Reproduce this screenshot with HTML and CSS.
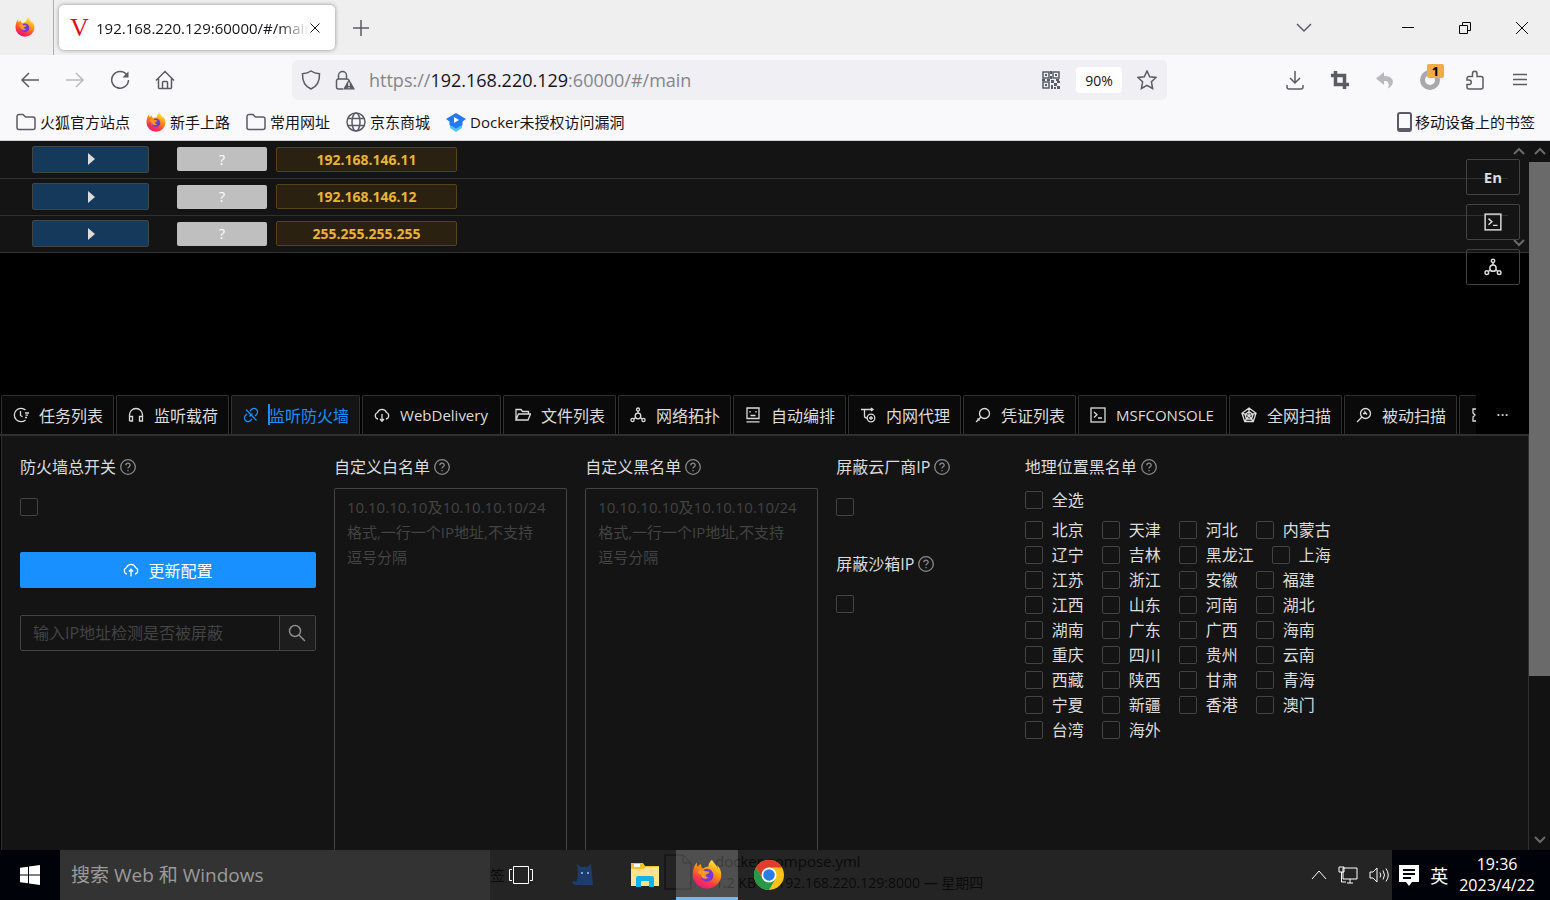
FILE: index.html
```html
<!DOCTYPE html>
<html lang="zh-CN">
<head>
    <meta charset="UTF-8">
    <meta name="viewport" content="width=device-width, initial-scale=1.0">
    <title>192.168.220.129:60000/#/main</title>
    <link rel="stylesheet" href="styles.css">
</head>
<body>
    <!-- shared icons -->
    <svg class="sprite" width="0" height="0" aria-hidden="true">
        <defs>
            <linearGradient id="fire" x1="0.8" y1="0" x2="0.3" y2="1">
                <stop offset="0" stop-color="#fff44f"/>
                <stop offset="0.4" stop-color="#ff980e"/>
                <stop offset="0.75" stop-color="#ff3647"/>
                <stop offset="1" stop-color="#e31587"/>
            </linearGradient>
            <symbol id="firefox" viewBox="0 0 20 20">
                <path fill="url(#fire)" d="M18.6 6.6c-.4-1-1.300-2-2-2.400.5 1 .8 1.900.9 2.600-1-2.700-3-3.800-4.200-6.300C11.500 2 10.900 3.500 11 5c-1.500.1-2.600.6-3.500 1.300C6 5.800 5.900 4.200 6 3.300 5 3.800 4.300 4.500 3.800 5.200 3.200 4.400 3.200 3.200 3.300 2.300 1.500 4 .5 7 .5 10.500a9.500 9.300 0 0 0 19 0c0-1.400-.4-2.900-.9-3.900z"/>
                <circle cx="10" cy="10.800" r="4.300" fill="#7139d6"/>
                <path fill="#ff9a1f" d="M3.500 8.500c1.500-1.600 4-1.500 5.500-.3 1 .1 2 .1 2.500.4-.2 1-1.600 1.400-2.300 1.900-.4 1 .6 2 2.100 1.700-1.500 1.700-5.200 1.100-5.600-1.700z"/>
            </symbol>
            <symbol id="folder" viewBox="0 0 20 20">
                <path d="M1 4.500a2 2 0 0 1 2-2h4l2.500 2.500H17a2 2 0 0 1 2 2v8.500a2 2 0 0 1-2 2H3a2 2 0 0 1-2-2z"/>
            </symbol>
            <symbol id="console" viewBox="0 0 16 16">
                <rect x="1" y="1" width="14" height="14"/>
                <path d="M4 5l3 2.800L4 10.500M8 11h4"/>
            </symbol>
            <symbol id="topology" viewBox="0 0 16 16">
                <circle cx="8" cy="2.500" r="1.500"/><circle cx="8" cy="9" r="2.800"/>
                <circle cx="2.500" cy="13" r="1.600"/><circle cx="13.500" cy="13" r="1.600"/>
                <path d="M8 4v2.200M5.600 10.500L3.800 12M10.400 10.500l1.800 1.500"/>
            </symbol>
            <symbol id="help" viewBox="0 0 16 16">
                <circle cx="8" cy="8" r="7.300"/>
                <path d="M5.800 6.300c.1-3 4.500-2.700 4.400-.1 0 1.500-2.200 1.500-2.200 3.200M8 11v1.200"/>
            </symbol>
            <symbol id="up" viewBox="0 0 12 8"><path d="M1 7l5-5 5 5"/></symbol>
            <symbol id="down" viewBox="0 0 12 8"><path d="M1 1l5 5 5-5"/></symbol>
        </defs>
    </svg>

    <header class="browser">
        <div class="tabstrip">
            <div class="pinned"><svg class="i20 plain"><use href="#firefox"/></svg></div>
            <div class="browser-tab">
                <span class="favicon">V</span>
                <span class="tab-title">192.168.220.129:60000/#/main</span>
                <button class="tab-close" aria-label="关闭标签页"><svg width="12" height="12" viewBox="0 0 12 12"><path d="M1.500 1.500l9 9M10.500 1.500l-9 9"/></svg></button>
            </div>
            <button class="new-tab" aria-label="新标签页"><svg width="16" height="16" viewBox="0 0 16 16"><path d="M8 0v16M0 8h16"/></svg></button>
            <div class="window-controls">
                <button class="list-tabs" aria-label="列出标签页"><svg width="18" height="12" viewBox="0 0 18 12"><path d="M2 2l7 7 7-7"/></svg></button>
                <button aria-label="最小化"><svg width="14" height="14" viewBox="0 0 14 14"><path d="M1 6.500h12"/></svg></button>
                <button aria-label="还原"><svg width="14" height="14" viewBox="0 0 14 14"><path d="M1.500 4.500h8v8h-8zM4.500 4V1.500h8v8H10"/></svg></button>
                <button aria-label="关闭"><svg width="14" height="14" viewBox="0 0 14 14"><path d="M1 1l12 12M13 1L1 13"/></svg></button>
            </div>
        </div>

        <div class="toolbar">
            <div class="tool-group">
                <button aria-label="后退"><svg class="i20" viewBox="0 0 20 20"><path d="M19 10H2M9 3l-7 7 7 7"/></svg></button>
                <button class="faded" aria-label="前进"><svg class="i20" viewBox="0 0 20 20"><path d="M1 10h17M11 3l7 7-7 7"/></svg></button>
                <button aria-label="刷新"><svg class="i20" viewBox="0 0 20 20"><path d="M17 5a8.400 8.400 0 1 0 1.500 5"/><path class="solid" d="M12.500 7.500h6v-6z"/></svg></button>
                <button aria-label="主页"><svg class="i20" viewBox="0 0 20 20"><path d="M1 10.500l9-9 9 9M3.500 8v9.500a1 1 0 0 0 1 1h11a1 1 0 0 0 1-1V8M7.500 18v-5.500a1 1 0 0 1 1-1h3a1 1 0 0 1 1 1V18"/></svg></button>
            </div>
            <div class="spacer"></div>
            <div class="urlbar">
                <svg class="i20" viewBox="0 0 20 20"><path d="M10 1c2.500 1.800 5 2.500 8.500 2.700.3 6.800-2 12.300-8.500 15.300C3.500 16 1.200 10.500 1.500 3.700 5 3.500 7.500 2.800 10 1z"/></svg>
                <svg class="i20 lock" viewBox="0 0 20 20"><path d="M8 19H3.500a2 2 0 0 1-2-2v-6a2 2 0 0 1 2-2h8a2 2 0 0 1 2 1M3.500 9V5.500a4 4 0 0 1 8 0V9"/><path class="solid" d="M14 9l6 10.500H8z"/><path class="mark" d="M14 12.500v3.500M14 17.300v1"/></svg>
                <div class="url">https://<b>192.168.220.129</b>:60000/#/main</div>
                <svg class="i20 qr" viewBox="0 0 20 20"><path d="M2 2h6v6H2zM12 2h6v6h-6zM2 12h6v6H2z"/><path class="solid" d="M4 4h2v2H4zM14 4h2v2h-2zM4 14h2v2H4zM9 1h2v3H9zM9 6h2v3H9zM1 9h3v2H1zM6 9h3v2H6zM10 10h3v3h-3zM15 9h3v2h-3zM13 13h3v3h-3zM16 11h3v2h-3zM10 15h2v4h-2zM16 16h3v3h-3zM13 17h2v2h-2z"/></svg>
                <button class="zoom-level">90%</button>
                <svg class="i20" viewBox="0 0 20 20"><path d="M10 1l2.700 5.700 6.300.8-4.600 4.300 1.200 6.700L10 15.300l-5.600 3.200 1.200-6.700L1 7.500l6.300-.8z"/></svg>
            </div>
            <div class="spacer"></div>
            <div class="tool-group">
                <button aria-label="下载"><svg class="i20" viewBox="0 0 20 20"><path d="M10 1v12M5 8l5 5 5-5M2 15v2a2 2 0 0 0 2 2h12a2 2 0 0 0 2-2v-2"/></svg></button>
                <button aria-label="截图"><svg class="i20 thick" viewBox="0 0 20 20"><path d="M5.500 1v13.500H19M1 5.500h13.500V19"/></svg></button>
                <button class="faded" aria-label="撤销"><svg class="i20" viewBox="0 0 20 20"><path class="solid" d="M9 2L1 8.500 9 15v-4c4-.3 6 1.500 4 7.500 8-5 6-12.500-4-12.500z"/></svg></button>
                <button class="ring" aria-label="代理"><svg class="i20" viewBox="0 0 20 20"><circle cx="10" cy="10" r="7.500"/></svg><span class="count">1</span></button>
                <button aria-label="扩展"><svg class="i20" viewBox="0 0 20 20"><path d="M7.500 6.500V3.500a2 2 0 0 1 4.500 0v3h4a2 2 0 0 1 2 2V17a2 2 0 0 1-2 2H4a2 2 0 0 1-2-2v-2.500h2a2 2 0 0 0 0-4.500H2V8.500a2 2 0 0 1 2-2z"/></svg></button>
                <button aria-label="菜单"><svg class="i20" viewBox="0 0 20 20"><path d="M3 4.500h14M3 9.500h14M3 14.500h14"/></svg></button>
            </div>
        </div>

        <nav class="bookmarks">
            <a href="#"><svg class="i20"><use href="#folder"/></svg>火狐官方站点</a>
            <a href="#"><svg class="i20 plain"><use href="#firefox"/></svg>新手上路</a>
            <a href="#"><svg class="i20"><use href="#folder"/></svg>常用网址</a>
            <a href="#"><svg class="i20" viewBox="0 0 20 20"><circle cx="10" cy="10" r="9"/><ellipse cx="10" cy="10" rx="4" ry="9"/><path d="M2 6.500h16M2 13.500h16"/></svg>京东商城</a>
            <a href="#"><svg class="i20 plain" viewBox="0 0 20 20"><path fill="#52c4f5" d="M4 13l6 3 6-3v3l-6 4-6-4z"/><path fill="#2378f5" d="M10 1l10 6-3.500 2.500V13L10 16.500 3.500 13V9.500L0 7z"/><path fill="#fff" d="M8 5l5 3-5 3z"/></svg>Docker未授权访问漏洞</a>
            <a class="mobile" href="#"><svg width="17" height="20" viewBox="0 0 17 20"><rect x="2" y="1" width="13" height="18" rx="2"/><path d="M2 17h13"/></svg>移动设备上的书签</a>
        </nav>
    </header>

    <main class="page">
        <div class="app">
            <section class="hosts">
                <table class="host-table">
                    <tbody>
                        <tr>
                            <td><button class="expand" aria-label="展开"><svg width="8" height="12" viewBox="0 0 8 12"><path d="M1 0l7 6-7 6z"/></svg></button></td>
                            <td><span class="tag unknown">?</span></td>
                            <td><span class="tag ip">192.168.146.11</span></td>
                        </tr>
                        <tr>
                            <td><button class="expand" aria-label="展开"><svg width="8" height="12" viewBox="0 0 8 12"><path d="M1 0l7 6-7 6z"/></svg></button></td>
                            <td><span class="tag unknown">?</span></td>
                            <td><span class="tag ip">192.168.146.12</span></td>
                        </tr>
                        <tr>
                            <td><button class="expand" aria-label="展开"><svg width="8" height="12" viewBox="0 0 8 12"><path d="M1 0l7 6-7 6z"/></svg></button></td>
                            <td><span class="tag unknown">?</span></td>
                            <td><span class="tag ip">255.255.255.255</span></td>
                        </tr>
                    </tbody>
                </table>
                <div class="host-scroll">
                    <svg width="12" height="8"><use href="#up"/></svg>
                    <svg width="12" height="8"><use href="#down"/></svg>
                </div>
                <div class="float-buttons">
                    <button>En</button>
                    <button aria-label="控制台"><svg width="18" height="18"><use href="#console"/></svg></button>
                    <button aria-label="网络拓扑"><svg width="18" height="18"><use href="#topology"/></svg></button>
                </div>
            </section>

            <nav class="tabs">
                <div class="tab-list">
                    <button class="tab"><svg viewBox="0 0 16 16"><path d="M12.500 3A6.700 6.700 0 1 0 12.500 13M7.500 4v4.500l2 1.200M12 6h4M12.500 8.200H15M12 10.500h2"/></svg>任务列表</button>
                    <button class="tab"><svg viewBox="0 0 16 16"><path d="M1.500 14V8a6.500 6.500 0 0 1 13 0v6h-3V9.500h3M1.500 9.500h3V14h-3"/></svg>监听载荷</button>
                    <button class="tab active"><svg viewBox="0 0 16 16"><path d="M7 4l1.500-1.500a3.200 3.200 0 0 1 5 5L12 9M9 12l-1.500 1.500a3.200 3.200 0 0 1-5-5L4 7M6.500 9.500l3-3M3 2.500l10.500 11"/></svg><span class="caret">监听防火墙</span></button>
                    <button class="tab latin"><svg viewBox="0 0 16 16"><path d="M4 12a3.400 3.400 0 0 1-.5-6.500 4.800 4.800 0 0 1 9 0A3.400 3.400 0 0 1 12 12M8 7v7M6 12l2 2.200 2-2.200"/></svg>WebDelivery</button>
                    <button class="tab"><svg viewBox="0 0 16 16"><path d="M1 13V2.500h5l1.500 2h6V7M1 13L3.500 7h12L13 13z"/></svg>文件列表</button>
                    <button class="tab"><svg><use href="#topology"/></svg>网络拓扑</button>
                    <button class="tab"><svg viewBox="0 0 16 16"><path d="M2 1h12v10.500H2zM1.500 14.800h13M5 4v1.500M11 4v1.500M5.500 8.500h5"/></svg>自动编排</button>
                    <button class="tab"><svg viewBox="0 0 16 16"><path d="M1 2.500h11M4.500 2.500V9q0 2 2.500 2M11 1l2 1.500L11 4"/><circle cx="11" cy="11" r="3.800"/><path d="M9 11h4M11 9v4"/></svg>内网代理</button>
                    <button class="tab"><svg viewBox="0 0 16 16"><circle cx="9.500" cy="6.500" r="5"/><path d="M6 10l-5 5M2.500 11.500l2 2"/></svg>凭证列表</button>
                    <button class="tab latin"><svg><use href="#console"/></svg>MSFCONSOLE</button>
                    <button class="tab"><svg viewBox="0 0 16 16"><path d="M8 1l7 5.200-2.700 8.300H3.700L1 6.200zM8 4.500l4 3-1.500 4.500h-5L4 7.500zM8 1v7M15 6.200L8 8.500 1 6.200M3.700 14.500L8 8.500l4.300 6"/></svg>全网扫描</button>
                    <button class="tab"><svg viewBox="0 0 16 16"><circle cx="9.500" cy="6.500" r="5"/><path d="M6 10l-5 5M7 6.500h2V5l2 2.500"/></svg>被动扫描</button>
                    <button class="tab" aria-label="设置"><svg viewBox="0 0 16 16"><path d="M6 2H2v4l2 2-2 2v4h4l2-1 2 1h4v-4l-2-2 2-2V2h-4L8 3z"/></svg></button>
                </div>
                <button class="more" aria-label="更多">···</button>
            </nav>

            <section class="panel">
                <div class="col">
                    <h2>防火墙总开关 <svg><use href="#help"/></svg></h2>
                    <input type="checkbox" class="switch" aria-label="防火墙总开关">
                    <button class="update"><svg width="16" height="16" viewBox="0 0 16 16"><path d="M4 12a3.400 3.400 0 0 1-.5-6.500 4.800 4.800 0 0 1 9 0A3.400 3.400 0 0 1 12 12M8 14.500V7.500M6 9.500l2-2.200 2 2.200"/></svg>更新配置</button>
                    <form class="check-ip">
                        <input type="text" placeholder="输入IP地址检测是否被屏蔽" aria-label="IP地址">
                        <button type="button" aria-label="搜索"><svg width="18" height="18" viewBox="0 0 18 18"><circle cx="7" cy="7" r="5.500"/><path d="M11 11l6 6"/></svg></button>
                    </form>
                </div>
                <div class="col">
                    <h2><label for="white">自定义白名单</label> <svg><use href="#help"/></svg></h2>
                    <textarea id="white" placeholder="10.10.10.10及10.10.10.10/24格式,一行一个IP地址,不支持逗号分隔"></textarea>
                </div>
                <div class="col">
                    <h2><label for="black">自定义黑名单</label> <svg><use href="#help"/></svg></h2>
                    <textarea id="black" placeholder="10.10.10.10及10.10.10.10/24格式,一行一个IP地址,不支持逗号分隔"></textarea>
                </div>
                <div class="col">
                    <h2><label for="cloud">屏蔽云厂商IP</label> <svg><use href="#help"/></svg></h2>
                    <input type="checkbox" class="switch" id="cloud">
                    <h2><label for="sandbox">屏蔽沙箱IP</label> <svg><use href="#help"/></svg></h2>
                    <input type="checkbox" class="switch" id="sandbox">
                </div>
                <div class="col">
                    <h2>地理位置黑名单 <svg><use href="#help"/></svg></h2>
                    <div class="regions all"><label><input type="checkbox">全选</label></div>
                    <div class="regions">
                        <label><input type="checkbox">北京</label>
                        <label><input type="checkbox">天津</label>
                        <label><input type="checkbox">河北</label>
                        <label><input type="checkbox">内蒙古</label>
                        <label><input type="checkbox">辽宁</label>
                        <label><input type="checkbox">吉林</label>
                        <label><input type="checkbox">黑龙江</label>
                        <label><input type="checkbox">上海</label>
                        <label><input type="checkbox">江苏</label>
                        <label><input type="checkbox">浙江</label>
                        <label><input type="checkbox">安徽</label>
                        <label><input type="checkbox">福建</label>
                        <label><input type="checkbox">江西</label>
                        <label><input type="checkbox">山东</label>
                        <label><input type="checkbox">河南</label>
                        <label><input type="checkbox">湖北</label>
                        <label><input type="checkbox">湖南</label>
                        <label><input type="checkbox">广东</label>
                        <label><input type="checkbox">广西</label>
                        <label><input type="checkbox">海南</label>
                        <label><input type="checkbox">重庆</label>
                        <label><input type="checkbox">四川</label>
                        <label><input type="checkbox">贵州</label>
                        <label><input type="checkbox">云南</label>
                        <label><input type="checkbox">西藏</label>
                        <label><input type="checkbox">陕西</label>
                        <label><input type="checkbox">甘肃</label>
                        <label><input type="checkbox">青海</label>
                        <label><input type="checkbox">宁夏</label>
                        <label><input type="checkbox">新疆</label>
                        <label><input type="checkbox">香港</label>
                        <label><input type="checkbox">澳门</label>
                        <label><input type="checkbox">台湾</label>
                        <label><input type="checkbox">海外</label>
                    </div>
                </div>
            </section>
        </div>

        <div class="scrollbar">
            <svg width="12" height="8"><use href="#up"/></svg>
            <div class="track"><div class="thumb"></div></div>
            <svg width="12" height="8"><use href="#down"/></svg>
        </div>
    </main>

    <footer class="taskbar">
        <!-- window showing through the translucent bar -->
        <div class="ghost ghost-label">签</div>
        <div class="ghost ghost-file">
            <svg width="28" height="36" viewBox="0 0 28 36"><path d="M1 1h18l8 8v26H1zM19 1v8h8"/></svg>
            <div>
                <div>docker-compose.yml</div>
                <div class="small">1.2 KB — 192.168.220.129:8000 — 星期四</div>
            </div>
        </div>
        <button class="start" aria-label="开始"><svg width="20" height="20" viewBox="0 0 20 20"><path fill="#fff" d="M0 2.800L8 1.700v7.800H0zM9 1.500L20 0v9.500H9zM0 10.500h8v7.800l-8-1.100zM9 10.500h11V20L9 18.500z"/></svg></button>
        <input class="search" type="text" placeholder="搜索 Web 和 Windows" aria-label="搜索">
        <button class="app-icon" aria-label="任务视图"><svg width="24" height="20" viewBox="0 0 24 20"><path fill="none" stroke="#fff" d="M4.500 1.500h15v17h-15zM3 4.500H.5v11H3M21 4.500h2.500v11H21"/></svg></button>
        <button class="app-icon" aria-label="Clash"><svg width="22" height="22" viewBox="0 0 22 22"><path fill="#1c3c6b" d="M5 0l4 3h6l4-3 1 9 1 12H5c-5 0-6-4-3-4l2 1 1-2 1-7z"/><circle cx="10" cy="9" r="1" fill="#a8c3e8"/><circle cx="16" cy="9" r="1" fill="#a8c3e8"/></svg></button>
        <button class="app-icon" aria-label="文件资源管理器"><svg width="28" height="24" viewBox="0 0 28 24"><path fill="#f6c12c" d="M0 0h12l2 3h14v20H0z"/><path fill="#ffe391" d="M0 6h12l3-2h13v19H0z"/><path fill="#fff" d="M3 1h6v3H3z"/><path fill="#12b3ea" d="M5 24V15q0-2 2-2h14q2 0 2 2v9h-5v-6h-8v6z"/></svg></button>
        <button class="app-icon running" aria-label="Firefox"><svg width="30" height="30"><use href="#firefox"/></svg></button>
        <button class="app-icon" aria-label="Chrome"><svg width="30" height="30" viewBox="0 0 30 30"><circle cx="15" cy="15" r="15" fill="#fbc116"/><path fill="#e33b2e" d="M2 7.500a15 15 0 0 1 26 0H15L8.500 18.800z"/><path fill="#279847" d="M2 7.500A15 15 0 0 0 15 30l6.500-11.300-13 0z"/><circle cx="15" cy="15" r="7.500" fill="#fff"/><circle cx="15" cy="15" r="5.800" fill="#2a7de9"/></svg></button>
        <div class="tray">
            <svg width="16" height="20" viewBox="0 0 16 20"><path d="M1 14l7-8 7 8"/></svg>
            <svg width="20" height="20" viewBox="0 0 20 20"><path d="M5 3h14v11H5zM9 18h6M12 14v4M1 2h5v5H1zM3.500 7v10H8"/></svg>
            <svg width="20" height="20" viewBox="0 0 20 20"><path d="M1 7h3l4-4v14l-4-4H1zM11 7.500q1.500 2.500 0 5M14 5.500q3 4.500 0 9M17 3.500q4.500 6.500 0 13"/></svg>
        </div>
        <div class="clock-area">
            <svg width="20" height="22" viewBox="0 0 20 22"><path fill="#fff" d="M0 1h20v17h-7l-3 4-3-4H0z"/><path stroke="#00020a" stroke-width="2" d="M4 6h12M4 10h12M4 14h8"/></svg>
            <span class="ime">英</span>
            <time>19:36<br>2023/4/22</time>
        </div>
    </footer>
</body>
</html>
```
FILE: styles.css
```css
* {
    box-sizing: border-box;
}
body {
    margin: 0;
    height: 100vh;
    display: flex;
    flex-direction: column;
    overflow: hidden;
    background-color: #000;
    font-family: "Open Sans", "Noto Sans CJK SC", sans-serif;
    font-size: 15px;
}
button, input, textarea {
    font: inherit;
    color: inherit;
    margin: 0;
    padding: 0;
    border: none;
    background: none;
}
a {
    color: inherit;
    text-decoration: none;
}
svg {
    flex: none;
    fill: none;
    stroke: currentColor;
}
.sprite {
    position: absolute;
}
.plain, .app-icon svg, .start svg {
    stroke: none;
}
.i20 {
    width: 20px;
    height: 20px;
    stroke-width: 1.5;
}
.solid {
    fill: currentColor;
    stroke: none;
}

/* browser window */
.browser {
    flex: none;
    background-color: #f9f9fb;
    color: #15141a;
    border-bottom: 1px solid #cfcfd3;
}
.browser svg {
    color: #5b5b66;
}
.tabstrip {
    display: flex;
    height: 55px;
    background-color: #efefef;
}
.pinned {
    width: 54px;
    padding: 17px 15px;
    border-right: 1px solid #aeaeb2;
}
.browser-tab {
    display: flex;
    align-items: center;
    width: 276px;
    margin: 5px;
    padding: 0 14px 0 11px;
    background-color: #fff;
    border-radius: 5px;
    box-shadow: 0 0 4px rgba(0, 0, 0, 0.4);
}
.favicon {
    width: 26px;
    color: #e01010;
    font: 26px "Liberation Serif", serif;
}
.tab-title {
    flex: 1;
    overflow: hidden;
    white-space: nowrap;
    font-size: 15px;
    -webkit-mask-image: linear-gradient(to left, transparent, #000 30px);
    mask-image: linear-gradient(to left, transparent, #000 30px);
}
.tab-close {
    display: flex;
}
.tab-close svg {
    color: #15141a;
}
.new-tab {
    width: 42px;
    display: flex;
    align-items: center;
    justify-content: center;
}
.new-tab svg {
    stroke-width: 1.5;
}
.window-controls {
    display: flex;
    margin-left: auto;
}
.window-controls button {
    width: 57px;
    display: flex;
    align-items: center;
    justify-content: center;
}
.window-controls .list-tabs {
    margin-right: 47px;
}
.window-controls button:not(.list-tabs) svg {
    color: #000;
}
.list-tabs svg {
    stroke-width: 1.5;
}
.toolbar {
    display: flex;
    align-items: center;
    height: 50px;
    padding: 0 8px 0 7px;
}
.tool-group {
    display: flex;
}
.tool-group button {
    position: relative;
    display: flex;
    justify-content: center;
    width: 45px;
}
.tool-group .faded svg {
    color: #b9b9c0;
}
.tool-group .thick {
    stroke-width: 3.5;
}
.ring svg {
    color: #a9a9a9;
    stroke-width: 5;
}
.count {
    position: absolute;
    top: -6px;
    right: 8px;
    width: 17px;
    height: 14px;
    border-radius: 2px;
    background-color: #f0ac47;
    color: #000;
    font-size: 13px;
    font-weight: bold;
    line-height: 14px;
    text-align: center;
}
.spacer {
    flex: 105;
}
.urlbar {
    flex: 856;
    display: flex;
    align-items: center;
    height: 40px;
    padding: 0 10px 0 9px;
    border-radius: 5px;
    background-color: #efeff4;
}
.urlbar .lock {
    margin-left: 14px;
}
.urlbar .mark {
    stroke: #efeff4;
}
.url {
    flex: 1;
    margin-left: 14px;
    color: #85858c;
    font-size: 18px;
}
.url b {
    font-weight: normal;
    color: #15141a;
}
.zoom-level {
    width: 46px;
    height: 26px;
    margin: 0 15px;
    border-radius: 4px;
    background-color: #fff;
    font-size: 14px;
}
.bookmarks {
    display: flex;
    gap: 16px;
    height: 35px;
    padding: 0 15px 2px 16px;
}
.bookmarks a {
    display: flex;
    align-items: center;
    gap: 4px;
    white-space: nowrap;
}
.bookmarks .mobile {
    margin-left: auto;
    gap: 2px;
}
.mobile svg {
    stroke-width: 2;
}

/* page */
.page {
    flex: 1;
    display: flex;
    min-height: 0;
    color: #dcdcdc;
    font-size: 16px;
}
.app {
    flex: 1;
    display: flex;
    flex-direction: column;
    min-width: 0;
}
.hosts {
    position: relative;
    flex: none;
    height: 254px;
}
.host-table {
    width: 100%;
    border-collapse: collapse;
    background-color: #141414;
}
.host-table td {
    height: 37px;
    padding: 0;
    border-bottom: 1px solid #303030;
}
.host-table td:first-child {
    width: 177px;
    padding-left: 32px;
}
.host-table td:nth-child(2) {
    width: 99px;
}
.expand, .tag {
    display: flex;
    align-items: center;
    justify-content: center;
    border-radius: 2px;
}
.expand {
    width: 117px;
    height: 27px;
    border: 1px solid #434343;
    background-color: #15395b;
}
.expand svg {
    fill: #dcdcdc;
    stroke: none;
}
.unknown {
    width: 90px;
    height: 24px;
    background-color: #bfbfbf;
    color: #fff;
    font-size: 14px;
}
.ip {
    width: 181px;
    height: 25px;
    border: 1px solid #594214;
    background-color: #2b2111;
    color: #e8b339;
    font-size: 14px;
    font-weight: bold;
}
.host-scroll {
    position: absolute;
    top: 0;
    right: 0;
    width: 21px;
    height: 111px;
    display: flex;
    flex-direction: column;
    align-items: center;
    justify-content: space-between;
    padding: 6px 0 5px;
    background-color: #141414;
}
.host-scroll svg, .scrollbar svg {
    color: #6a6a6a;
    stroke-width: 2;
}
.float-buttons {
    position: absolute;
    top: 18px;
    right: 9px;
    display: flex;
    flex-direction: column;
    gap: 9px;
}
.float-buttons button {
    display: flex;
    align-items: center;
    justify-content: center;
    width: 54px;
    height: 36px;
    border: 1px solid #434343;
    border-radius: 2px;
    font-size: 15px;
    font-weight: bold;
}
.float-buttons svg {
    stroke-width: 1.3;
}
.tabs {
    display: flex;
    flex: none;
    height: 41px;
    padding-left: 1px;
    border-bottom: 2px solid #303030;
}
.tab-list {
    flex: 1;
    display: flex;
    gap: 2px;
    overflow: hidden;
}
.tab {
    display: flex;
    flex: none;
    align-items: center;
    gap: 10px;
    padding: 0 10px 0 11px;
    border: 1px solid #303030;
    border-bottom: none;
    border-radius: 2px 2px 0 0;
    background-color: #0a0a0a;
    white-space: nowrap;
}
.tab svg {
    width: 16px;
    height: 16px;
    stroke-width: 1.3;
}
.latin {
    padding-right: 12px;
    font-size: 15px;
}
.active {
    background-color: #141414;
    color: #1890ff;
}
.caret {
    position: relative;
}
.caret::before {
    content: "";
    position: absolute;
    left: -1px;
    top: 1px;
    width: 2px;
    height: 21px;
    background-color: #1890ff;
}
.more {
    width: 53px;
}
.panel {
    flex: 1;
    display: grid;
    grid-template-columns: 5fr 4fr 4fr 3fr 8fr;
    min-height: 0;
    margin-left: 1px;
    padding: 19px 10px 0 9px;
    border: 1px solid #303030;
    border-width: 0 1px;
    background-color: #141414;
}
.col {
    display: flex;
    flex-direction: column;
    align-items: flex-start;
    min-width: 0;
    padding: 0 9px;
}
h2 {
    display: flex;
    align-items: center;
    gap: 4px;
    margin: 0;
    font-size: 16px;
    font-weight: normal;
    line-height: 24px;
}
h2 svg {
    width: 16px;
    height: 16px;
    color: #8a8a8a;
    stroke-width: 1.3;
}
input[type="checkbox"] {
    appearance: none;
    flex: none;
    width: 18px;
    height: 18px;
    border: 1px solid #434343;
    border-radius: 2px;
}
.switch {
    margin: 19px 0 36px;
}
.update {
    display: flex;
    align-items: center;
    justify-content: center;
    gap: 9px;
    width: 100%;
    height: 36px;
    border-radius: 2px;
    background-color: #1890ff;
    color: #fff;
}
.update svg {
    stroke-width: 1.3;
}
.check-ip {
    display: flex;
    width: 100%;
    height: 36px;
    margin-top: 27px;
    border: 1px solid #434343;
    border-radius: 2px;
}
.check-ip input {
    flex: 1;
    min-width: 0;
    padding: 0 12px;
}
.check-ip button {
    display: flex;
    align-items: center;
    justify-content: center;
    width: 36px;
    border-left: 1px solid #434343;
    background-color: #1d1d1d;
    color: #8c8c8c;
}
.check-ip svg {
    stroke-width: 1.5;
}
.page ::placeholder {
    color: #434343;
}
textarea {
    width: 100%;
    flex: 1;
    margin-top: 9px;
    padding: 6px 20px 6px 12px;
    border: 1px solid #434343;
    border-bottom: none;
    border-radius: 2px 2px 0 0;
    resize: none;
    font-size: 15px;
    line-height: 25px;
}
.regions {
    display: flex;
    flex-wrap: wrap;
    column-gap: 18px;
    max-width: 320px;
}
.regions label {
    display: flex;
    align-items: center;
    gap: 9px;
    height: 25px;
    line-height: 24px;
}
.all {
    margin: 8px 0 5px;
}
.scrollbar {
    flex: none;
    display: flex;
    flex-direction: column;
    align-items: center;
    gap: 7px;
    width: 21px;
    padding: 6px 0;
    background-color: #121212;
}
.track {
    flex: 1;
    width: 100%;
}
.thumb {
    height: 77%;
    background-color: #6a6a6a;
}

/* windows taskbar */
.taskbar {
    position: relative;
    flex: none;
    display: flex;
    height: 50px;
    background-color: #242424;
    color: #fff;
}
.start, .app-icon {
    display: flex;
    align-items: center;
    justify-content: center;
    width: 60px;
}
.start {
    background-color: #00020a;
}
.app-icon {
    position: relative;
    width: 62px;
}
.search {
    width: 430px;
    padding: 0 11px;
    background-color: #333;
    font-size: 19px;
}
.search::placeholder {
    color: #9b9b9b;
}
.running {
    background-color: rgba(255, 255, 255, 0.2);
    border-bottom: 3px solid #76b9ed;
}
.ghost {
    position: absolute;
    color: #0b0b0b;
}
.ghost-label {
    left: 490px;
    top: 14px;
}
.ghost-file {
    display: flex;
    align-items: center;
    gap: 23px;
    top: 0;
    left: 664px;
    font-size: 15px;
    line-height: 22px;
}
.ghost-file .small {
    font-size: 14px;
}
.tray {
    display: flex;
    align-items: center;
    gap: 11px;
    margin-left: auto;
    padding-right: 3px;
}
.clock-area {
    display: flex;
    align-items: center;
    gap: 11px;
    padding: 0 15px 0 7px;
    background-color: #00020a;
}
.clock-area svg {
    stroke: none;
}
.ime {
    font-size: 18px;
}
time {
    font-size: 16px;
    line-height: 21px;
    text-align: center;
}
```
